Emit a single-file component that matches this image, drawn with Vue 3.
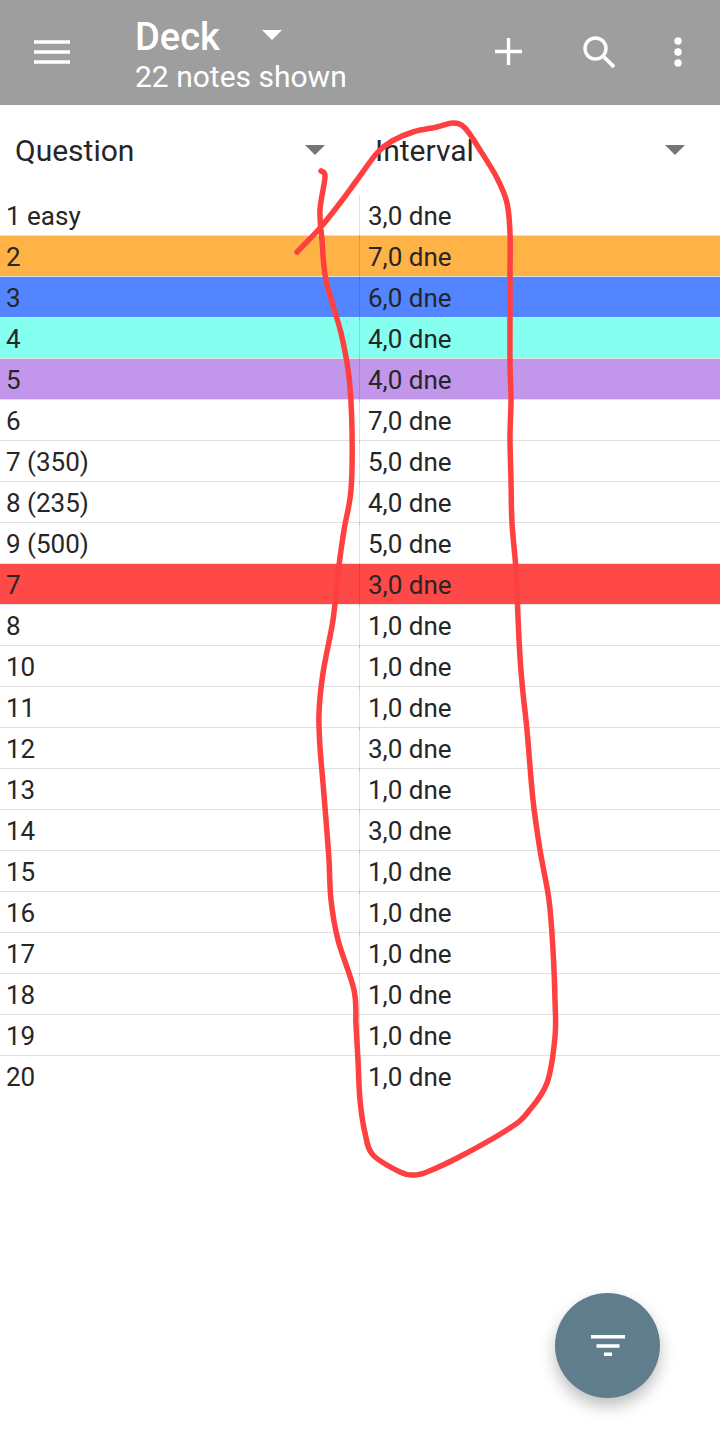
<template>
  <div class="screen">
    <header class="toolbar">
      <button class="icon-btn menu" aria-label="Menu">
        <svg width="38" height="26" viewBox="0 0 38 26"><path d="M0 3h36M0 13h36M0 23h36" stroke="#fff" stroke-width="3.4" transform="translate(1 0)"/></svg>
      </button>
      <div class="titles">
        <div class="deck-row">
          <span class="deck">Deck</span>
          <span class="caret caret-white"></span>
        </div>
        <div class="subtitle">22 notes shown</div>
      </div>
      <div class="actions">
        <svg class="plus" width="27" height="27" viewBox="0 0 27 27"><path d="M13.500 0v27M0 13.500h27" stroke="#fff" stroke-width="3.400"/></svg>
        <svg class="search" width="32" height="32" viewBox="0 0 32 32"><circle cx="12.500" cy="12.500" r="10.500" fill="none" stroke="#fff" stroke-width="3.400"/><path d="M20 20l11 11" stroke="#fff" stroke-width="3.800"/></svg>
        <svg class="more" width="10" height="32" viewBox="0 0 10 32"><circle cx="5" cy="5" r="3.700" fill="#fff"/><circle cx="5" cy="16" r="3.700" fill="#fff"/><circle cx="5" cy="27" r="3.700" fill="#fff"/></svg>
      </div>
    </header>

    <div class="columns">
      <div class="col-head"><span>Question</span><span class="caret caret-grey"></span></div>
      <div class="col-head"><span>Interval</span><span class="caret caret-grey"></span></div>
    </div>

    <div class="list">
      <div v-for="(note, i) in notes" :key="i" class="row" :class="note.color">
        <div class="cell first">{{ note.q }}</div>
        <div class="cell second">{{ note.days }} dne</div>
      </div>
    </div>

    <button class="fab" aria-label="Filter">
      <svg width="34" height="22" viewBox="0 0 34 22"><path d="M0 1.700h34M5.500 11h23M13 19.300h8" stroke="#fff" stroke-width="3.400"/></svg>
    </button>

    <!-- red marker scribble on top of the screenshot -->
    <svg class="scribble" width="720" height="1452" viewBox="0 0 720 1452">
      <path :d="scribblePath" fill="none" stroke="#ff4040" stroke-width="5.500" stroke-linecap="round" stroke-linejoin="round"/>
    </svg>
  </div>
</template>

<script setup>
const notes = [
  { q: '1 easy', days: '3,0' },
  { q: '2', days: '7,0', color: 'orange' },
  { q: '3', days: '6,0', color: 'blue' },
  { q: '4', days: '4,0', color: 'cyan' },
  { q: '5', days: '4,0', color: 'purple' },
  { q: '6', days: '7,0' },
  { q: '7 (350)', days: '5,0' },
  { q: '8 (235)', days: '4,0' },
  { q: '9 (500)', days: '5,0' },
  { q: '7', days: '3,0', color: 'red' },
  { q: '8', days: '1,0' },
  { q: '10', days: '1,0' },
  { q: '11', days: '1,0' },
  { q: '12', days: '3,0' },
  { q: '13', days: '1,0' },
  { q: '14', days: '3,0' },
  { q: '15', days: '1,0' },
  { q: '16', days: '1,0' },
  { q: '17', days: '1,0' },
  { q: '18', days: '1,0' },
  { q: '19', days: '1,0' },
  { q: '20', days: '1,0' }
]

// hand drawn line, smoothed with a catmull-rom spline
const points = [
  [297, 252], [320, 228], [340, 203], [357, 180], [377, 153], [392, 141], [413, 132], [437, 127],
  [453, 123], [465, 128], [480, 150], [497, 178], [507, 203], [510, 233], [510, 277], [510, 320],
  [510, 363], [511, 400], [510, 437], [511, 480], [512, 523], [516, 570], [518, 617],
  [520, 657], [523, 693], [527, 730], [533, 800], [540, 850], [549, 900], [553, 950], [555, 1000],
  [555, 1037], [547, 1083], [528, 1112], [510, 1128], [463, 1155], [427, 1172], [413, 1175], [400, 1172],
  [373, 1155], [365, 1133], [360, 1100], [358, 1060], [356, 1025], [354, 990], [338, 940], [331, 900],
  [329, 860], [326, 820], [323, 783], [320, 747], [319, 713], [323, 673], [333, 620], [338, 573],
  [344, 530], [351, 490], [352, 430], [349, 377], [341, 333], [326, 280], [322, 240], [320, 210],
  [325, 177], [321, 171]
]

const scribblePath = points.reduce((d, p, i) => {
  if (i === 0) return `M${p[0]} ${p[1]}`
  const p0 = points[i - 2] || points[i - 1]
  const p1 = points[i - 1]
  const p3 = points[i + 1] || p
  const c1x = p1[0] + (p[0] - p0[0]) / 6
  const c1y = p1[1] + (p[1] - p0[1]) / 6
  const c2x = p[0] - (p3[0] - p1[0]) / 6
  const c2y = p[1] - (p3[1] - p1[1]) / 6
  return `${d} C${c1x} ${c1y} ${c2x} ${c2y} ${p[0]} ${p[1]}`
}, '')
</script>

<style scoped>
.screen {
  position: relative;
  width: 720px;
  height: 1452px;
  overflow: hidden;
  background: #fff;
  font-family: Roboto, "Liberation Sans", sans-serif;
  color: #262626;
}

.toolbar {
  display: flex;
  align-items: flex-start;
  height: 105px;
  background: #9e9e9e;
  color: #fff;
}

.icon-btn {
  border: none;
  padding: 0;
  background: none;
}

.menu {
  width: 135px;
  height: 105px;
  padding: 0 0 2px 33px;
  display: flex;
  align-items: center;
}

.titles {
  flex: 1;
  padding-top: 15px;
}

.deck-row {
  display: flex;
  align-items: flex-start;
  height: 43px;
}

.deck {
  font-size: 38px;
  line-height: 44px;
  font-weight: 500;
}

.subtitle {
  font-size: 30px;
  line-height: 38px;
}

.caret {
  width: 0;
  height: 0;
  border-left: 10px solid transparent;
  border-right: 10px solid transparent;
}

.caret-white {
  margin: 15px 0 0 42px;
  border-top: 10px solid #fff;
}

.caret-grey {
  border-top: 10px solid #757575;
}

.actions {
  display: flex;
  align-items: center;
  height: 103px;
  padding-right: 37px;
}

.plus {
  margin-right: 61px;
}

.search {
  margin-right: 58px;
}

.columns {
  display: grid;
  grid-template-columns: 360px 360px;
  height: 90px;
}

.col-head {
  display: flex;
  align-items: center;
  justify-content: space-between;
  padding: 0 35px 0 15px;
  height: 90px;
  font-size: 30px;
}

.col-head + .col-head {
  padding-left: 15px;
}

.row {
  display: grid;
  grid-template-columns: 360px 360px;
  height: 41px;
  border-bottom: 1px solid #e0e0e0;
  box-sizing: border-box;
  font-size: 26px;
  line-height: 43px;
}

.row:last-child {
  border-bottom: none;
}

.cell {
  white-space: nowrap;
}

.first {
  padding-left: 6px;
  border-right: 1px solid rgba(0, 0, 0, 0.12);
}

.second {
  padding-left: 8px;
}

.orange { background: #ffb347; }
.blue { background: #5285ff; }
.cyan { background: #85ffef; }
.purple { background: #c296ea; }
.red { background: #ff4848; }

.fab {
  position: absolute;
  left: 555px;
  top: 1293px;
  width: 105px;
  height: 105px;
  padding: 0;
  border: none;
  border-radius: 50%;
  background: #607d8b;
  box-shadow: 0 8px 16px rgba(0, 0, 0, 0.26);
  display: flex;
  align-items: center;
  justify-content: center;
}

.scribble {
  position: absolute;
  left: 0;
  top: 0;
  pointer-events: none;
}
</style>
